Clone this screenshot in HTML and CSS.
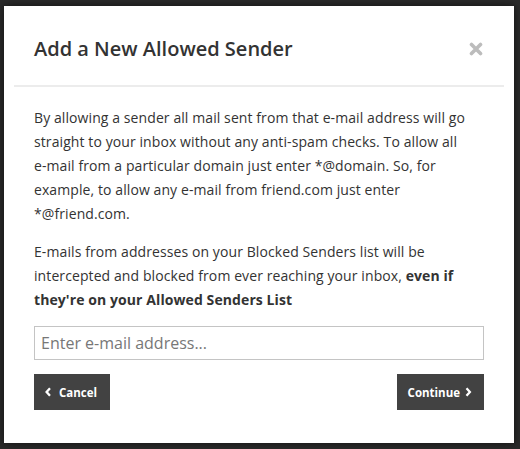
FILE: index.html
```html
<!DOCTYPE html>
<html>
<head>
<meta charset="utf-8">
<link rel="stylesheet" href="styles.css">
</head>
<body>
<div class="modal">
  <div class="modal-header">
    <h2 class="modal-title">Add a New Allowed Sender</h2>
    <button class="close" aria-label="Close">
      <svg width="14" height="14" viewBox="0 0 14 14"><path d="M2.5 2.5 L11.5 11.5 M11.5 2.5 L2.5 11.5" stroke="#bcbcbc" stroke-width="3.6" stroke-linecap="round"/></svg>
    </button>
  </div>
  <div class="modal-body">
    <p>By allowing a sender all mail sent from that <span class="nw">e-mail</span> address will go straight to your inbox without any <span class="nw">anti-spam</span> checks. To allow all <span class="nw">e-mail</span> from a particular domain just enter *@domain. So, for example, to allow any <span class="nw">e-mail</span> from friend.com just enter *@friend.com.</p>
    <p><span class="nw">E-mails</span> from addresses on your Blocked Senders list will be intercepted and blocked from ever reaching your inbox, <strong>even if they're on your Allowed Senders List</strong></p>
    <input class="email" type="text" placeholder="Enter e-mail address...">
    <div class="actions">
      <button class="btn btn-back"><svg class="chev" width="6" height="10" viewBox="0 0 6 10"><path d="M5 1.2 L1.6 5 L5 8.8" fill="none" stroke="#fff" stroke-width="2.3"/></svg>Cancel</button>
      <button class="btn btn-next">Continue<svg class="chev" width="7" height="10" viewBox="0 0 7 10"><path d="M1.5 1.2 L4.9 5 L1.5 8.8" fill="none" stroke="#fff" stroke-width="2.3"/></svg></button>
    </div>
  </div>
</div>
</body>
</html>
```

FILE: styles.css
```css
html, body {
  margin: 0;
  padding: 0;
  background: #2a2a2a;
  height: 100%;
}
body {
  padding: 6px 6px 6px 4px;
  box-sizing: border-box;
  font-family: "Open Sans", "DejaVu Sans", sans-serif;
  color: #333;
}
.modal {
  width: 510px;
  height: 437px;
  background: #fff;
  box-shadow: 0 0 8px rgba(0,0,0,0.6);
  box-sizing: border-box;
}
.modal-header {
  margin: 0 10px;
  padding: 28px 20px 21px;
  border-bottom: 2px solid #ececec;
  display: flex;
  align-items: center;
  justify-content: space-between;
}
.modal-title {
  margin: 0;
  font-size: 20px;
  font-weight: 600;
  line-height: 30px;
  color: #333;
}
.close {
  border: 0;
  background: none;
  padding: 0;
  margin-right: 1px;
  display: flex;
  cursor: pointer;
}
.modal-body {
  padding: 19px 30px 0;
}
.modal-body p {
  margin: 0 0 14px;
  font-size: 14px;
  line-height: 24px;
  letter-spacing: 0.09px;
}
.nw {
  white-space: nowrap;
}
.modal-body strong {
  font-weight: 700;
}
.email {
  display: block;
  width: 100%;
  box-sizing: border-box;
  height: 34px;
  border: 1px solid #c4c4c4;
  padding: 0 6px;
  font-family: "Open Sans", sans-serif;
  font-size: 16px;
  color: #333;
  margin: 0;
  outline: none;
}
.email::placeholder {
  color: #777;
}
.actions {
  display: flex;
  justify-content: space-between;
  margin-top: 14px;
}
.btn {
  height: 36px;
  background: #424242;
  color: #fff;
  border: 0;
  border-radius: 0;
  font-family: "Open Sans", sans-serif;
  font-weight: 700;
  font-size: 11.5px;
  display: flex;
  align-items: center;
  cursor: pointer;
}
.btn-back {
  padding: 0 13px 0 11px;
  gap: 8px;
}
.btn-next {
  padding: 0 12px 0 11px;
  gap: 5px;
}
```
